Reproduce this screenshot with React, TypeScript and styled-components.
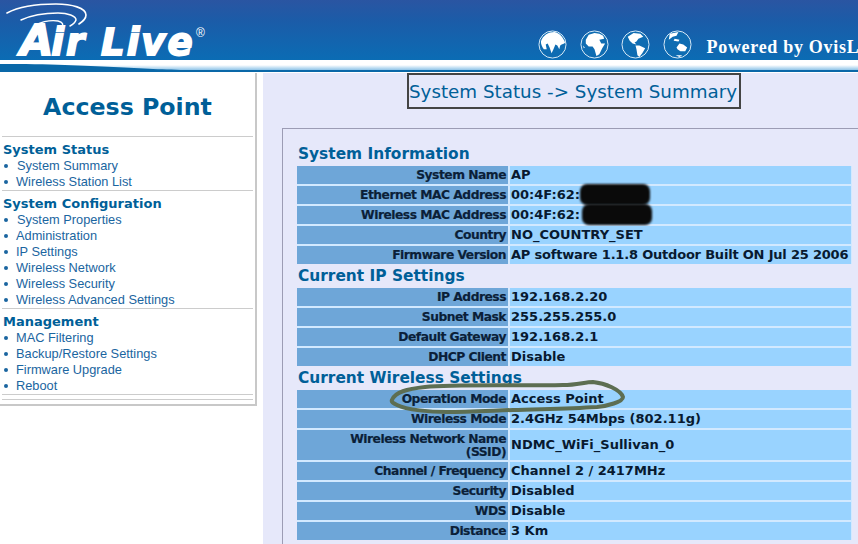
import React from 'react'
import styled, { createGlobalStyle } from 'styled-components'

const GlobalStyle = createGlobalStyle`
  html, body {
    margin: 0;
    padding: 0;
    height: 100%;
    overflow: hidden;
    background: #fff;
  }
`

const Page = styled.div`
  width: 858px;
  height: 544px;
  overflow: hidden;
  display: flex;
  flex-direction: column;
  font-family: "DejaVu Sans", Verdana, sans-serif;
`

const Header = styled.header`
  height: 60px;
  flex: none;
  display: flex;
  align-items: flex-start;
  white-space: nowrap;
  background: linear-gradient(#2a55a2 0%, #1b5ca8 35%, #0b6cb4 100%);
`

const Logo = styled.div`
  position: relative;
  width: 214px;
  height: 60px;
  flex: none;
  padding: 25px 0 0 20px;
  box-sizing: border-box;
  color: #fff;
  font: italic bold 37px/30px "DejaVu Sans", Verdana, sans-serif;
  -webkit-text-stroke: 1.8px #fff;
  letter-spacing: 2px;
`

const LogoInitial = styled.span`
  font-size: 43px;
  letter-spacing: -2px;
`

const Registered = styled.span`
  position: absolute;
  left: 196px;
  top: 26px;
  font: normal 12px/14px "Liberation Sans", Arial, sans-serif;
  letter-spacing: 0;
  -webkit-text-stroke: 0;
`

const Waves = styled.svg`
  position: absolute;
  left: 6px;
  top: 3px;
`

const Globes = styled.div`
  display: flex;
  gap: 12.5px;
  margin: 30px 0 0 324px;
  flex: none;
`

const PoweredBy = styled.div`
  margin: 37px 0 0 15px;
  color: #fff;
  font: bold 18px/20px "Liberation Serif", "Times New Roman", serif;
  letter-spacing: 0.7px;
`

const Swoosh = styled.svg`
  display: block;
  flex: none;
`

const Body = styled.div`
  flex: 1;
  display: flex;
  align-items: flex-start;
  min-height: 0;
`

const Sidebar = styled.nav`
  width: 255px;
  flex: none;
  margin-top: 1px;
  background: #fff;
  border-right: 2px solid #c8c8c8;
  border-bottom: 2px solid #c8c8c8;
`

const SideTitle = styled.h1`
  margin: 0;
  height: 63px;
  padding-top: 19px;
  box-sizing: border-box;
  text-align: center;
  color: #005f98;
  font: bold 23.7px/30px "DejaVu Sans", Verdana, sans-serif;
`

const MenuGroup = styled.div`
  margin: 0 2px;
  border-top: 1px solid #ccc;
  padding-top: 4px;
  height: ${p => p.$height}px;
`

const MenuHeading = styled.div`
  height: 17px;
  padding-left: 1px;
  color: #005f98;
  font: bold 13px/17px "DejaVu Sans", Verdana, sans-serif;
`

const MenuItem = styled.a`
  display: block;
  position: relative;
  height: 16px;
  padding-left: ${p => (p.$first ? 15 : 14)}px;
  color: #1a65a0;
  font: 12.8px/16px "Liberation Sans", Arial, sans-serif;

  &::before {
    content: '';
    position: absolute;
    left: 2px;
    top: 6px;
    width: 4px;
    height: 4px;
    border-radius: 50%;
    background: #1a65a0;
  }
`

const Main = styled.main`
  flex: 1;
  height: 100%;
  margin: 1px 0 0 6px;
  background: #e6e8fa;
  display: flex;
  flex-direction: column;
  align-items: flex-start;
`

const TitleBox = styled.div`
  margin-left: 144px;
  width: 334px;
  height: 36px;
  box-sizing: border-box;
  border: 2px solid #444;
  padding-right: 2px;
  text-align: center;
  color: #005f98;
  font: 18.3px/33px "DejaVu Sans", Verdana, sans-serif;
  white-space: nowrap;
`

const Panel = styled.section`
  position: relative;
  align-self: stretch;
  flex: 1;
  margin: 19px 0 0 19px;
  padding: 15px 6px 0 14px;
  border-top: 1px solid #9c9cb4;
  border-left: 1px solid #9c9cb4;
`

const SectionHeading = styled.h2`
  margin: 0;
  height: 22px;
  padding-left: 1px;
  color: #005f98;
  font: bold 15.4px/20px "DejaVu Sans", Verdana, sans-serif;
`

const InfoGrid = styled.div`
  display: grid;
  grid-template-columns: 211px 341px;
  gap: 2px;
  background: #d2e9ff;
  margin-bottom: 2px;
  font: bold 13px/14px "DejaVu Sans", Verdana, sans-serif;
`

const Label = styled.div`
  background: #6ea6d8;
  min-height: 18px;
  padding: 3px 2px 1px 0;
  box-sizing: border-box;
  text-align: right;
  color: #0b1f38;
  font-size: 12.3px;
  letter-spacing: -0.5px;
  line-height: 13px;
  -webkit-text-stroke: 0.2px #0b1f38;
`

const Value = styled.div`
  position: relative;
  display: flex;
  align-items: center;
  background: #99d3ff;
  min-height: 18px;
  padding-left: 1px;
  box-sizing: border-box;
  color: #081a30;
  white-space: nowrap;
  letter-spacing: ${p => (p.$tight ? '-0.2px' : '0')};
`

const Blot = styled.span`
  position: absolute;
  left: ${p => p.$left}px;
  top: -2px;
  width: 70px;
  height: 21px;
  border-radius: 7px;
  background: #0a0a0a;
  filter: blur(1.2px);
`

const Circled = styled.svg`
  position: absolute;
  left: 102px;
  top: 247px;
  pointer-events: none;
`

const Globe = ({ land }: { land: string }) => (
  <svg width="29" height="29" viewBox="0 0 30 30">
    <circle cx="15" cy="15" r="14" fill="#0f6cb2" stroke="#dcecf8" strokeWidth="1" />
    <path d={land} fill="#fff" />
  </svg>
)

const globeLand = [
  'M3 12C5 5 11 2 17 2C22 3 26 7 28 13C27 15 25 14 23 16L22 20L20 16L18 15L16 20L14 24L12 18L10 14L8 15L9 20L6 20C4 17 3 15 3 12Z',
  'M6 10L9 5L15 3L20 4L24 6L25 9L20 10L22 14L26 14L23 19L20 25L17 27L15 20L13 17L9 17L6 14ZM3 16L5 18L4 19Z',
  'M7 7L13 3L20 4L23 7L18 9L16 12L14 13L16 15L12 14L9 11ZM15 16L19 16L25 19L22 24L19 28L17 26L16 20Z',
  'M14 18L17 14L21 15L25 18L23 22L18 22L15 20ZM7 4L16 2L14 6L10 7L6 10ZM12 9L17 10L16 12L11 11ZM13 26L20 26L17 28Z',
]

type Row = { label: React.ReactNode; value: React.ReactNode; blot?: number; tight?: boolean }

const sections: { title: string; rows: Row[] }[] = [
  {
    title: 'System Information',
    rows: [
      { label: 'System Name', value: 'AP' },
      { label: 'Ethernet MAC Address', value: '00:4F:62:', blot: 70 },
      { label: 'Wireless MAC Address', value: '00:4F:62:', blot: 72 },
      { label: 'Country', value: 'NO_COUNTRY_SET' },
      { label: 'Firmware Version', value: 'AP software 1.1.8 Outdoor Built ON Jul 25 2006', tight: true },
    ],
  },
  {
    title: 'Current IP Settings',
    rows: [
      { label: 'IP Address', value: '192.168.2.20' },
      { label: 'Subnet Mask', value: '255.255.255.0' },
      { label: 'Default Gateway', value: '192.168.2.1' },
      { label: 'DHCP Client', value: 'Disable' },
    ],
  },
  {
    title: 'Current Wireless Settings',
    rows: [
      { label: 'Operation Mode', value: 'Access Point' },
      { label: 'Wireless Mode', value: '2.4GHz 54Mbps (802.11g)' },
      { label: <>Wireless Network Name<br />(SSID)</>, value: 'NDMC_WiFi_Sullivan_0' },
      { label: 'Channel / Frequency', value: 'Channel 2 / 2417MHz' },
      { label: 'Security', value: 'Disabled' },
      { label: 'WDS', value: 'Disable' },
      { label: 'Distance', value: '3 Km' },
    ],
  },
]

const menu = [
  { title: 'System Status', height: 49, items: ['System Summary', 'Wireless Station List'] },
  {
    title: 'System Configuration',
    height: 113,
    items: ['System Properties', 'Administration', 'IP Settings', 'Wireless Network', 'Wireless Security', 'Wireless Advanced Settings'],
  },
  { title: 'Management', height: 81, items: ['MAC Filtering', 'Backup/Restore Settings', 'Firmware Upgrade', 'Reboot'] },
]

const App: React.FC = () => {
  return (
    <Page>
      <GlobalStyle />
      <Header>
        <Logo>
          <Waves width="82" height="26" viewBox="0 0 82 26" fill="none" stroke="#fff" strokeLinecap="round">
            <path d="M1 10C14 3 34 1 50 1C66 1 80 5 80 12C80 16 77 18 73 21" strokeWidth="1.6" />
            <path d="M15 17C28 11 42 10 52 10C62 10 70 13 70 17C69 20 66 22 64 23" strokeWidth="1.5" />
            <path d="M29 22C38 18 46 17 52 18C57 19 58 22 55 24" strokeWidth="1.3" />
          </Waves>
          <LogoInitial>A</LogoInitial>ir Live
          <Registered>®</Registered>
        </Logo>
        <Globes>
          {globeLand.map(land => <Globe key={land} land={land} />)}
        </Globes>
        <PoweredBy>Powered by OvisLink</PoweredBy>
      </Header>
      <Swoosh width="858" height="12" viewBox="0 0 858 12">
        <defs>
          <linearGradient id="band" x1="0" y1="0" x2="0" y2="1">
            <stop offset="0.5" stopColor="#fff" />
            <stop offset="1" stopColor="#8fc4e8" />
          </linearGradient>
        </defs>
        <rect width="858" height="12" fill="#0a68a8" />
        <path d="M0 0H858V10H190C140 10 100 4 0 4Z" fill="url(#band)" />
      </Swoosh>
      <Body>
        <Sidebar>
          <SideTitle>Access Point</SideTitle>
          {menu.map(group => (
            <MenuGroup key={group.title} $height={group.height}>
              <MenuHeading>{group.title}</MenuHeading>
              {group.items.map((item, i) => (
                <MenuItem key={item} $first={i === 0 && group.title !== 'Management'}>{item}</MenuItem>
              ))}
            </MenuGroup>
          ))}
          <MenuGroup $height={0} />
          <MenuGroup $height={0} />
        </Sidebar>
        <Main>
          <TitleBox>System Status -&gt; System Summary</TitleBox>
          <Panel>
            {sections.map(section => (
              <div key={section.title}>
                <SectionHeading>{section.title}</SectionHeading>
                <InfoGrid>
                  {section.rows.map((row, i) => (
                    <React.Fragment key={i}>
                      <Label>{row.label}</Label>
                      <Value $tight={row.tight}>
                        {row.value}
                        {row.blot && <Blot $left={row.blot} />}
                      </Value>
                    </React.Fragment>
                  ))}
                </InfoGrid>
              </div>
            ))}
            <Circled width="248" height="40" viewBox="0 0 248 40" fill="none">
              <path
                d="M7 24C10 16 22 13 40 11C70 8 130 10 178 9C192 9 200 6 208 6C220 7 236 14 238 21C238 26 222 30 212 31C180 33 150 33 128 34C100 35 80 36 62 36C45 36 22 34 12 29C8 27 6 26 7 24Z"
                stroke="#5d6e52"
                strokeWidth="4"
              />
            </Circled>
          </Panel>
        </Main>
      </Body>
    </Page>
  )
}

export default App
